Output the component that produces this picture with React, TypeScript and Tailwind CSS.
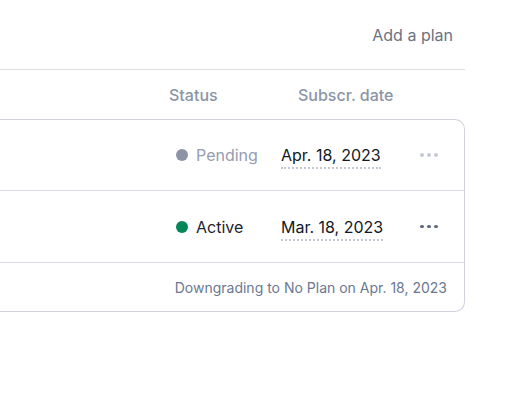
export default function App() {
  const rows = [
    { status: "Pending", dot: "bg-[#8c94a6]", text: "text-[#959daf]", date: "Apr. 18, 2023", dim: true, h: "h-[71px]" },
    { status: "Active", dot: "bg-[#04855a]", text: "text-[#1d2433]", date: "Mar. 18, 2023", dim: false, h: "h-[72px]" },
  ];

  return (
    <div className="w-[513px] h-[416px] overflow-hidden bg-white font-['Inter',sans-serif]">
      <div className="w-[465px]">
        {/* Top action */}
        <div className="h-[70px] flex items-center justify-end pr-3 border-b border-[#dcdde5]">
          <span className="text-[16px] text-[#6b7280]">Add a plan</span>
        </div>

        {/* Column headers */}
        <div className="h-[49px] flex items-center">
          <span className="ml-[169px] w-[129px] text-[16px] font-medium text-[#8b95a7]">Status</span>
          <span className="text-[16px] font-medium text-[#8b95a7]">Subscr. date</span>
        </div>

        {/* Card */}
        <div className="border border-l-0 border-[#cfd2dc] rounded-r-[10px]">
          {rows.map((r) => (
            <div key={r.status} className={`${r.h} flex items-center border-b border-[#dcdde5]`}>
              <div className="ml-[176px] w-[105px] flex items-center gap-[8px]">
                <span className={`w-[12px] h-[12px] rounded-full ${r.dot}`} />
                <span className={`text-[16px] ${r.text}`}>{r.status}</span>
              </div>
              <div className="w-[139px] flex">
                <span className="text-[16px] text-[#111827] pb-[2px] border-b-2 border-dotted border-[#c3c7d0] leading-[20px] mt-[4px]">
                  {r.date}
                </span>
              </div>
              <div className="flex gap-[3.5px]">
                {[0, 1, 2].map((i) => (
                  <span
                    key={i}
                    className={`w-[3.5px] h-[3.5px] rounded-full ${r.dim ? "bg-[#c6cad4]" : "bg-[#5f6b80]"}`}
                  />
                ))}
              </div>
            </div>
          ))}
          <div className="h-[48px] flex items-center justify-end pr-[17px]">
            <span className="text-[14px] text-[#6b7891]">Downgrading to No Plan on Apr. 18, 2023</span>
          </div>
        </div>
      </div>
    </div>
  );
}
